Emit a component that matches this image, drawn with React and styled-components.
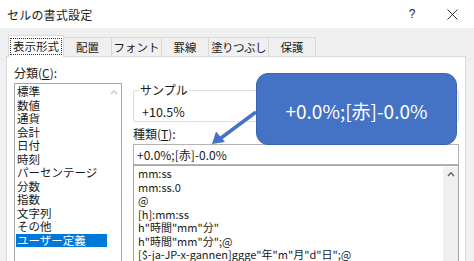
import React from "react";
import styled, { createGlobalStyle } from "styled-components";

const GlobalStyle = createGlobalStyle`
  html, body {
    margin: 0;
    padding: 0;
    width: 474px;
    height: 261px;
    overflow: hidden;
  }
  body {
    font-family: "Noto Sans CJK JP", "Noto Sans", sans-serif;
    font-size: 12px;
    color: #1a1a1a;
  }
`;

const Window = styled.div`
  position: relative;
  width: 474px;
  height: 261px;
  background: #f0f0f0;
  display: flex;
  flex-direction: column;
  overflow: hidden;
`;

const TitleBar = styled.div`
  height: 28px;
  background: #ffffff;
  display: flex;
  align-items: center;
  padding: 0 2px 0 7px;
  font-size: 12px;
  flex-shrink: 0;
`;

const Title = styled.div`
  flex: 1;
  letter-spacing: 0.2px;
`;

const TitleButton = styled.div`
  width: 40px;
  display: flex;
  justify-content: center;
  align-items: center;
  font-size: 12px;
  font-family: "Liberation Sans", sans-serif;
  color: #222;
`;

const TabRow = styled.div`
  display: flex;
  align-items: flex-end;
  margin-top: 7px;
  padding-left: 8px;
  height: 22px;
  flex-shrink: 0;
`;

const Tab = styled.div`
  width: ${(p) => p.$w}px;
  height: ${(p) => (p.$active ? "22px" : "20px")};
  display: flex;
  align-items: center;
  justify-content: center;
  white-space: nowrap;
  background: ${(p) => (p.$active ? "#ffffff" : "#f0f0f0")};
  border: 1px solid #d9d9d9;
  border-bottom: ${(p) => (p.$active ? "none" : "1px solid #d9d9d9")};
  margin-left: ${(p) => (p.$first ? "0" : "-1px")};
  font-size: 11.5px;
  letter-spacing: ${(p) => (p.$tight ? "-0.6px" : "0")};
  box-sizing: border-box;
  position: relative;
  z-index: ${(p) => (p.$active ? 2 : 1)};
`;

const FocusBox = styled.span`
  border: 1px dotted #333;
  padding: 0 2px;
  line-height: 15px;
`;

const Panel = styled.div`
  flex: 1;
  margin: -1px 8px 0 6px;
  background: #ffffff;
  border: 1px solid #d9d9d9;
  display: flex;
  gap: 11px;
  padding: 8px 0 0 7px;
`;

const LeftCol = styled.div`
  width: 108px;
  display: flex;
  flex-direction: column;
`;

const RightCol = styled.div`
  width: 326px;
  display: flex;
  flex-direction: column;
  padding-top: 19px;
`;

const Label = styled.div`
  font-size: 12px;
  line-height: 16px;
  height: 16px;
  margin-bottom: ${(p) => p.$mb || "2px"};
`;

const ListBox = styled.div`
  flex: 1;
  border: 1px solid #a5a5a5;
  border-bottom: none;
  display: flex;
  padding: 1px 0 0 1px;
`;

const Items = styled.div`
  flex: 1;
  display: flex;
  flex-direction: column;
`;

const Item = styled.div`
  height: 13.5px;
  line-height: 13.5px;
  font-size: ${(p) => (p.$small ? "11px" : "11.5px")};
  padding-left: ${(p) => (p.$small ? "3px" : "1px")};
  background: ${(p) => (p.$selected ? "#0078d7" : "transparent")};
  color: ${(p) => (p.$selected ? "#ffffff" : "#1a1a1a")};
  white-space: nowrap;
`;

const ScrollBar = styled.div`
  width: ${(p) => p.$w || "14px"};
  background: ${(p) => p.$bg || "#ffffff"};
  display: flex;
  justify-content: center;
  padding-top: 4px;
`;

const GroupBox = styled.fieldset`
  margin: 0 0 4px 0;
  height: 38px;
  box-sizing: border-box;
  border: 1px solid #dcdcdc;
  border-radius: 2px;
  padding: 0 0 0 8px;
  font-size: 12px;
`;

const Legend = styled.legend`
  padding: 0 1px;
  margin-left: -3px;
  font-size: 12px;
  line-height: 12px;
`;

const SampleText = styled.div`
  font-size: 12.5px;
  line-height: 16px;
  padding-top: 8px;
`;

const Input = styled.div`
  height: 21px;
  box-sizing: border-box;
  border: 1px solid #b4b4b4;
  padding-left: 3px;
  display: flex;
  align-items: center;
  font-size: 12px;
`;

const Callout = styled.div`
  position: absolute;
  left: 256px;
  top: 73px;
  width: 201px;
  height: 72px;
  box-sizing: border-box;
  background: #4472c4;
  border: 1px solid #3b63ad;
  border-radius: 12px;
  display: flex;
  align-items: center;
  justify-content: center;
  color: #ffffff;
  font-size: 19px;
  padding-top: 2px;
`;

const Overlay = styled.svg`
  position: absolute;
  left: 0;
  top: 0;
  pointer-events: none;
`;

const Up = ({ color = "#a8a8a8" }) => (
  <svg width="8" height="6" viewBox="0 0 8 6">
    <path d="M1 5 L4 1.8 L7 5" fill="none" stroke={color} strokeWidth="1.4" />
  </svg>
);

const tabs = [
  { label: "表示形式", w: 56 },
  { label: "配置", w: 49 },
  { label: "フォント", w: 51 },
  { label: "罫線", w: 48 },
  { label: "塗りつぶし", w: 61, tight: true },
  { label: "保護", w: 48 },
];

const categories = [
  "標準",
  "数値",
  "通貨",
  "会計",
  "日付",
  "時刻",
  "パーセンテージ",
  "分数",
  "指数",
  "文字列",
  "その他",
  "ユーザー定義",
];

const formats = [
  "mm:ss",
  "mm:ss.0",
  "@",
  "[h]:mm:ss",
  'h"時間"mm"分"',
  'h"時間"mm"分";@',
  '[$-ja-JP-x-gannen]ggge"年"m"月"d"日";@',
];

const App = () => (
  <Window>
    <GlobalStyle />
    <TitleBar>
      <Title>セルの書式設定</Title>
      <TitleButton>?</TitleButton>
      <TitleButton>
        <svg width="11" height="11" viewBox="0 0 11 11">
          <path d="M0.5 0.5 L10.5 10.5 M10.5 0.5 L0.5 10.5" stroke="#333" strokeWidth="1" />
        </svg>
      </TitleButton>
    </TitleBar>
    <TabRow>
      {tabs.map((t, i) => (
        <Tab key={t.label} $w={t.w} $tight={t.tight} $active={i === 0} $first={i === 0}>
          {i === 0 ? <FocusBox>{t.label}</FocusBox> : t.label}
        </Tab>
      ))}
    </TabRow>
    <Panel>
      <LeftCol>
        <Label>
          分類(<u>C</u>):
        </Label>
        <ListBox>
          <Items>
            {categories.map((c) => (
              <Item key={c} $selected={c === "ユーザー定義"}>
                {c}
              </Item>
            ))}
          </Items>
          <ScrollBar>
            <Up color="#c8c8c8" />
          </ScrollBar>
        </ListBox>
      </LeftCol>
      <RightCol>
        <GroupBox>
          <Legend>サンプル</Legend>
          <SampleText>+10.5%</SampleText>
        </GroupBox>
        <Label $mb="2px">
          種類(<u>T</u>):
        </Label>
        <Input>+0.0%;[赤]-0.0%</Input>
        <ListBox>
          <Items>
            {formats.map((f) => (
              <Item key={f} $small>
                {f}
              </Item>
            ))}
          </Items>
          <ScrollBar $w="15px" $bg="#f0f0f0">
            <Up color="#606060" />
          </ScrollBar>
        </ListBox>
      </RightCol>
    </Panel>
    <Callout>+0.0%;[赤]-0.0%</Callout>
    <Overlay width="474" height="261" viewBox="0 0 474 261">
      <line x1="256" y1="112" x2="221" y2="138" stroke="#4472c4" strokeWidth="3.5" />
      <path d="M212 144 L216 131.5 L225 142 Z" fill="#4472c4" />
    </Overlay>
  </Window>
);

export default App;
